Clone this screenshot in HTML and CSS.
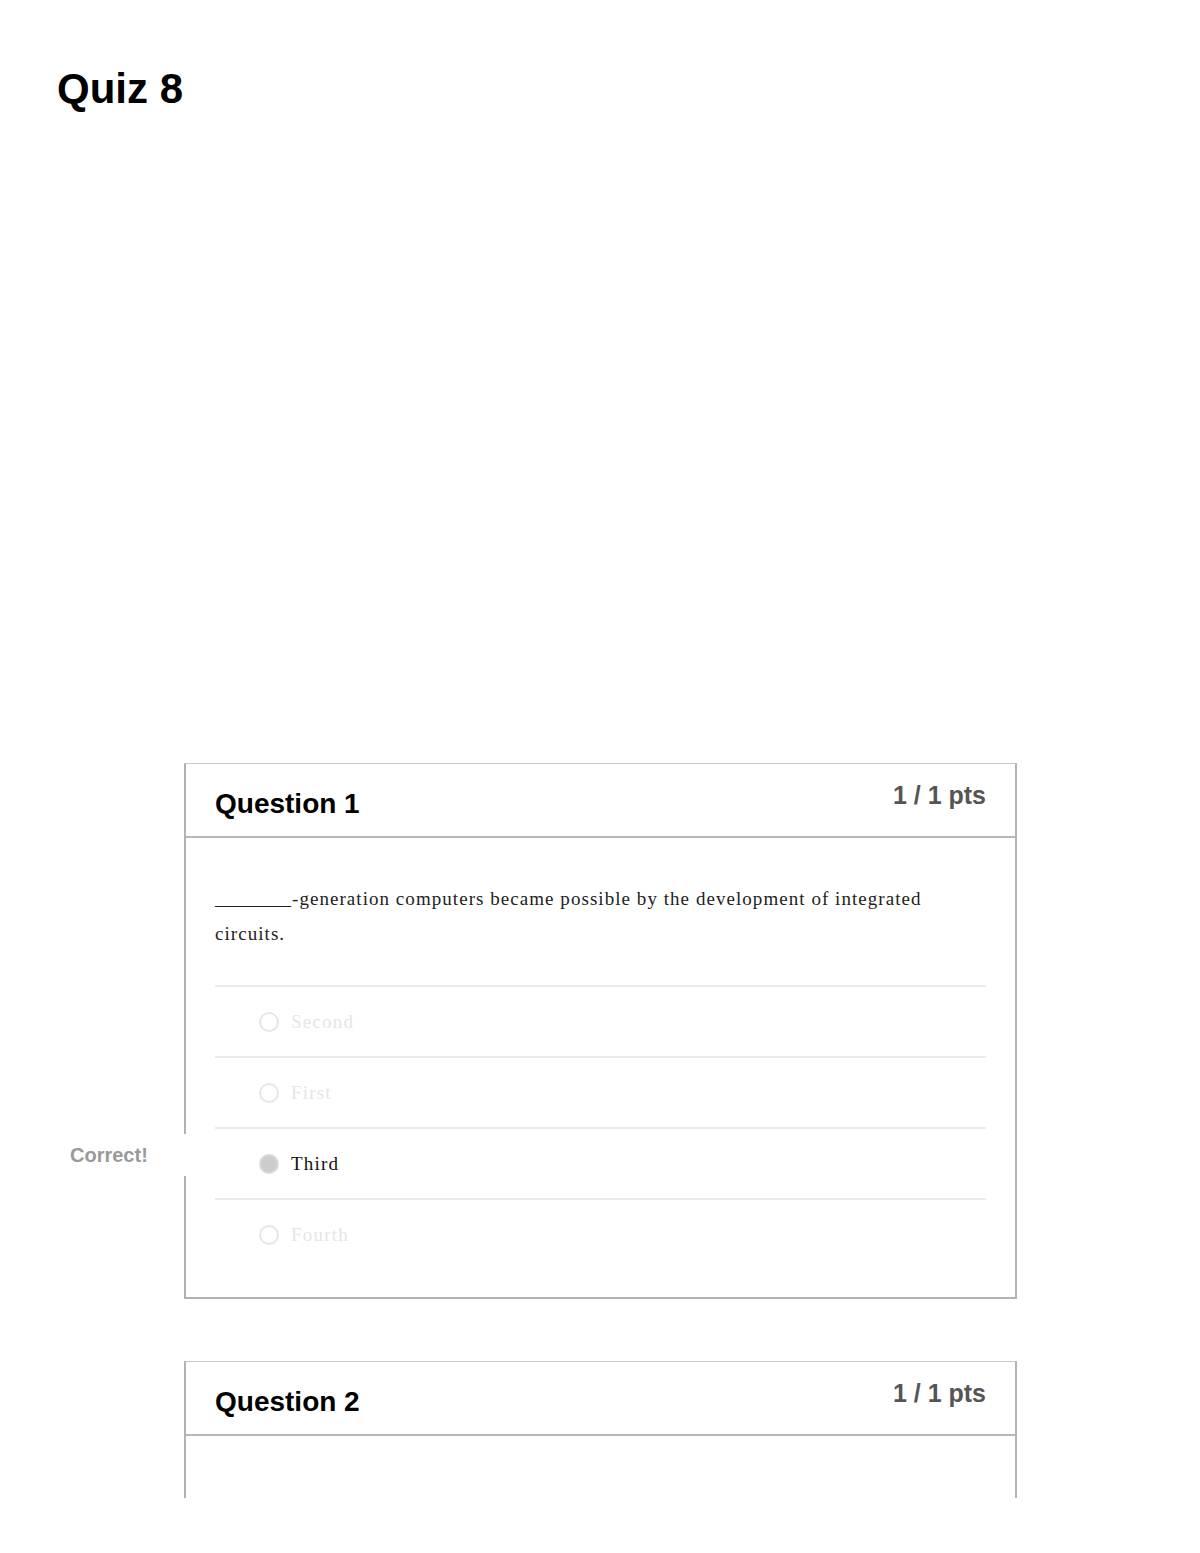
FILE: index.html
```html
<!DOCTYPE html>
<html>
<head>
<meta charset="utf-8">
<title>Quiz 8</title>
<link rel="stylesheet" href="styles.css">
</head>
<body>
<div class="page">
  <h1 class="title">Quiz 8</h1>

  <section class="card">
    <header class="card-head">
      <h2 class="q-title">Question 1</h2>
      <div class="pts">1 / 1 pts</div>
    </header>
    <div class="card-body">
      <p class="q-text"><span class="blank">________</span>-generation computers became possible by the development of integrated circuits.</p>
      <ul class="answers">
        <li class="answer"><span class="radio"></span><span class="a-text">Second</span></li>
        <li class="answer"><span class="radio"></span><span class="a-text">First</span></li>
        <li class="answer selected"><span class="correct-label">Correct!</span><span class="radio"></span><span class="a-text">Third</span></li>
        <li class="answer"><span class="radio"></span><span class="a-text">Fourth</span></li>
      </ul>
    </div>
  </section>

  <section class="card card-cut">
    <header class="card-head">
      <h2 class="q-title">Question 2</h2>
      <div class="pts">1 / 1 pts</div>
    </header>
    <div class="card-body empty"></div>
  </section>
</div>
</body>
</html>
```

FILE: styles.css
```css
* { box-sizing: border-box; }
html, body { margin: 0; padding: 0; background: #fff; }
body { font-family: "Liberation Sans", Arial, sans-serif; color: #000; }

.title {
  margin: 65px 0 0 57px;
  font-size: 42px;
  line-height: 48px;
  font-weight: bold;
  color: #000;
}

.card {
  margin: 650px 0 0 184px;
  width: 833px;
  border-top: 1px solid #c8c8c8;
  border-left: 2px solid #b2b2b2;
  border-right: 2px solid #b2b2b2;
  border-bottom: 2px solid #b2b2b2;
  background: #fff;
}

.card-cut {
  margin-top: 62px;
  border-bottom: none;
}

.card-head {
  height: 74px;
  display: flex;
  justify-content: space-between;
  align-items: flex-start;
  padding: 17px 29px 0 29px;
  border-bottom: 2px solid #b8b8b8;
}

.q-title {
  margin: 7px 0 0 0;
  font-size: 28px;
  line-height: 32px;
  font-weight: bold;
  color: #000;
}

.pts {
  font-size: 25px;
  line-height: 28px;
  font-weight: bold;
  color: #555;
}

.card-body {
  padding: 43px 29px 28px 29px;
}

.card-body.empty { height: 62px; padding: 0; }

.q-text {
  margin: 0 0 34px 0;
  font-family: "Liberation Serif", "Times New Roman", serif;
  font-size: 19px;
  line-height: 35px;
  color: #222;
  letter-spacing: 1.05px;
}

.blank { letter-spacing: 0; margin-right: 1px; }

.answers { list-style: none; margin: 0; padding: 0; }

.answer {
  position: relative;
  height: 71px;
  border-top: 2px solid #ebebeb;
  display: flex;
  align-items: center;
  padding-left: 44px;
  font-family: "Liberation Serif", "Times New Roman", serif;
  font-size: 19px;
  letter-spacing: 1.2px;
  color: #e6e6e6;
}

.radio {
  width: 20px;
  height: 20px;
  border-radius: 50%;
  border: 2px solid #e6e6e6;
  background: #fff;
  margin-right: 12px;
  flex: none;
}

.answer.selected { color: #111; }
.answer.selected .radio { background: #cccccc; border-color: #dadada; }

.correct-label {
  position: absolute;
  left: -155px;
  top: 5px;
  width: 130px;
  height: 42px;
  line-height: 42px;
  padding-left: 10px;
  background: #fff;
  font-family: "Liberation Sans", Arial, sans-serif;
  font-weight: bold;
  font-size: 20px;
  letter-spacing: 0;
  color: #9a9a9a;
}
```
